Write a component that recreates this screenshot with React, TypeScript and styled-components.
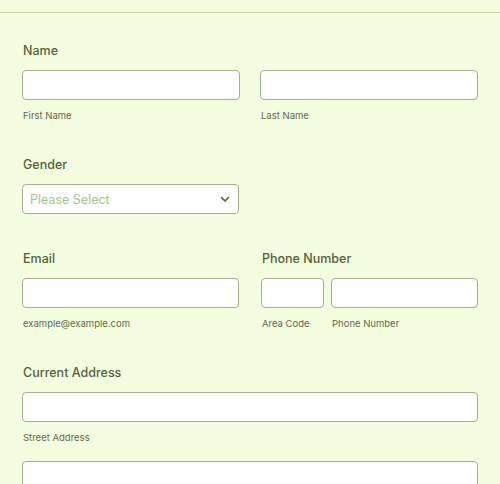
import React from "react";
import styled, { createGlobalStyle } from "styled-components";

const Global = createGlobalStyle`
  html, body { margin: 0; padding: 0; background: #f3fde0; }
  body { font-family: Inter, "Noto Sans", sans-serif; }
  * { box-sizing: border-box; }
`;

const Page = styled.div`
  width: 500px;
  height: 484px;
  overflow: hidden;
  background: #f3fde0;
  padding-top: 12px;
`;

const TopRule = styled.div`
  height: 1px;
  background: #c9d4ab;
`;

const Form = styled.div`
  display: flex;
  flex-direction: column;
  gap: 31px;
  padding: 27px 22px 0 22px;
`;

const Row = styled.div<{ $cols: string; $gap: number; $after?: number }>`
  display: grid;
  grid-template-columns: ${(p) => p.$cols};
  column-gap: ${(p) => p.$gap}px;
  margin-bottom: ${(p) => p.$after ?? 0}px;
`;

const Field = styled.div`
  display: flex;
  flex-direction: column;
`;

const Label = styled.div`
  font-size: 12.5px;
  font-weight: 500;
  line-height: 22px;
  color: #56613a;
  margin-bottom: 8px;
  padding-left: 1px;
`;

const Inputs = styled.div<{ $cols: string; $gap: number }>`
  display: grid;
  grid-template-columns: ${(p) => p.$cols};
  column-gap: ${(p) => p.$gap}px;
`;

const Sub = styled.div`
  display: flex;
  flex-direction: column;
`;

const Box = styled.div`
  height: 30px;
  background: #ffffff;
  border: 1px solid #a9ad8f;
  border-radius: 4px;
`;

const SubLabel = styled.div`
  margin-top: 9px;
  font-size: 9.5px;
  line-height: 14px;
  color: #616a4b;
  padding-left: 1px;
`;

const Select = styled.div`
  height: 30px;
  background: #ffffff;
  border: 1px solid #a9ad8f;
  border-radius: 4px;
  display: flex;
  align-items: center;
  justify-content: space-between;
  padding: 0 8px 0 7px;
`;

const Placeholder = styled.span`
  font-size: 12.5px;
  color: #a9c28b;
`;

const Stack = styled.div`
  display: flex;
  flex-direction: column;
`;

const NextBox = styled(Box)`
  margin-top: 16px;
`;

const Chevron = () => (
  <svg width="10" height="7" viewBox="0 0 10 7">
    <path d="M1.5 1.5 L5 5 L8.5 1.5" fill="none" stroke="#56613a" strokeWidth="1.7" strokeLinecap="round" strokeLinejoin="round" />
  </svg>
);

export default function App() {
  return (
    <Page>
      <Global />
      <TopRule />
      <Form>
        <Field>
          <Label>Name</Label>
          <Inputs $cols="218px 218px" $gap={20}>
            <Sub>
              <Box />
              <SubLabel>First Name</SubLabel>
            </Sub>
            <Sub>
              <Box />
              <SubLabel>Last Name</SubLabel>
            </Sub>
          </Inputs>
        </Field>
        <Row $cols="217px" $gap={0} $after={3}>
          <Field>
            <Label>Gender</Label>
            <Select>
              <Placeholder>Please Select</Placeholder>
              <Chevron />
            </Select>
          </Field>
        </Row>
        <Row $cols="217px 217px" $gap={22}>
          <Field>
            <Label>Email</Label>
            <Sub>
              <Box />
              <SubLabel>example@example.com</SubLabel>
            </Sub>
          </Field>
          <Field>
            <Label>Phone Number</Label>
            <Inputs $cols="63px 147px" $gap={7}>
              <Sub>
                <Box />
                <SubLabel>Area Code</SubLabel>
              </Sub>
              <Sub>
                <Box />
                <SubLabel>Phone Number</SubLabel>
              </Sub>
            </Inputs>
          </Field>
        </Row>
        <Field>
          <Label>Current Address</Label>
          <Stack>
            <Box />
            <SubLabel>Street Address</SubLabel>
            <NextBox />
          </Stack>
        </Field>
      </Form>
    </Page>
  );
}
